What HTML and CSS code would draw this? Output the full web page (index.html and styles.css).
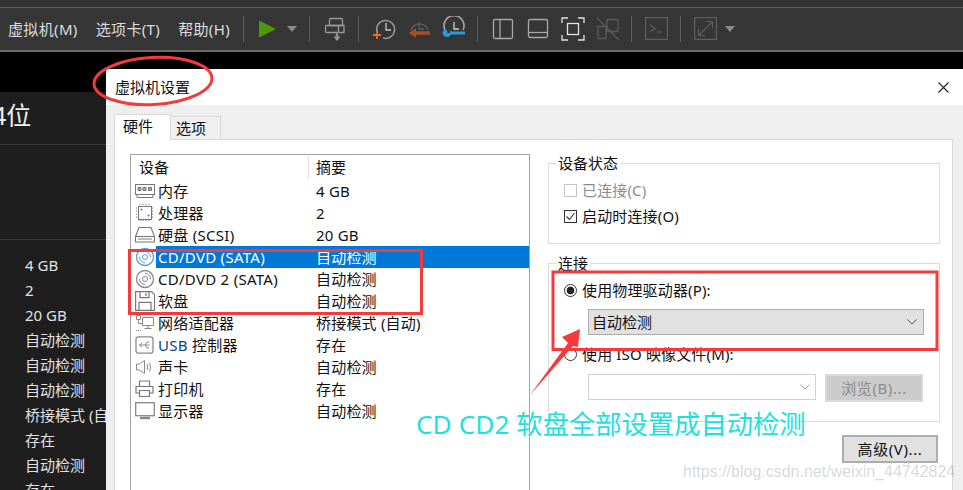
FILE: index.html
```html
<!DOCTYPE html>
<html lang="zh">
<head>
<meta charset="utf-8">
<title>虚拟机设置</title>
<link rel="stylesheet" href="styles.css">
</head>
<body>
<div class="toolbar">
  <span class="menu">虚拟机(M)</span><span class="menu">选项卡(T)</span><span class="menu">帮助(H)</span>
  <i class="sep first"></i>
  <span class="tb"><svg width="20" height="20" viewBox="0 0 20 20"><path d="M1 1.500 18 10 1 18.500z" fill="#4e9a06"/></svg></span>
  <span class="caret"></span>
  <i class="sep wide"></i>
  <span class="tb"><svg width="22" height="26" viewBox="0 0 22 26" fill="none" stroke="#9a9a9a" stroke-width="1.300"><rect x="5.500" y="2.500" width="13" height="7" rx="1"/><rect x="1.500" y="9.500" width="13" height="7" rx="1"/><path d="M15 9.500h5v7h-5"/><path d="M13 17.500v3" stroke-width="2.500"/><path d="M9.500 20.500h7L13 25z" fill="#9a9a9a" stroke="none"/></svg></span>
  <i class="sep"></i>
  <span class="tb"><svg width="24" height="26" viewBox="0 0 24 26" fill="none"><path d="M5 16a9 9 0 1 1 6 6" stroke="#9a9a9a" stroke-width="1.500"/><path d="M14 7v7h5" stroke="#c8c8c8" stroke-width="1.300"/><path d="M1 19h8M5 15v8" stroke="#e8702a" stroke-width="1.800"/></svg></span>
  <span class="tb"><svg width="24" height="26" viewBox="0 0 24 26" fill="none"><path d="M4 14a9 9 0 0 1 17 0" stroke="#5c5c5c" stroke-width="1.500"/><path d="M12 6v7h5" stroke="#5c5c5c" stroke-width="1.300"/><path d="M23 17H7" stroke="#a9501f" stroke-width="3.500"/><path d="M9 12v10l-7-5z" fill="#a9501f"/></svg></span>
  <span class="tb"><svg width="24" height="26" viewBox="0 0 24 26" fill="none"><path d="M3 14a10 10 0 1 1 18 0" stroke="#a0a0a0" stroke-width="1.700"/><path d="M12 6v7h5" stroke="#d0d0d0" stroke-width="1.300"/><path d="M23 17H8" stroke="#2b9ad8" stroke-width="3"/><path d="M2 14a4 4 0 0 0 3 7 4 4 0 0 0 4-4 3 3 0 0 0-1-3v3H5v-3z" fill="#2b9ad8"/></svg></span>
  <i class="sep"></i>
  <span class="tb"><svg width="22" height="22" viewBox="0 0 22 22" fill="none" stroke="#a8a8a8" stroke-width="1.300"><rect x="1.500" y="1.500" width="19" height="19" rx="1.500"/><path d="M8 1.500v19"/></svg></span>
  <span class="tb"><svg width="22" height="22" viewBox="0 0 22 22" fill="none" stroke="#a8a8a8" stroke-width="1.300"><rect x="1.500" y="1.500" width="19" height="18" rx="1.500"/><path d="M1.500 14.500h19"/></svg></span>
  <span class="tb"><svg width="24" height="24" viewBox="0 0 24 24" fill="none" stroke="#e4e4e4" stroke-width="1.300"><path d="M1 6V1h6M17 1h6v5M23 18v5h-6M7 23H1v-5"/><rect x="6.500" y="6.500" width="11" height="11"/></svg></span>
  <span class="tb"><svg width="24" height="24" viewBox="0 0 24 24" fill="none" stroke="#5a5a5a" stroke-width="1.300"><path d="M2 9.500h8v12H3a1 1 0 0 1-1-1zM11 2.500h10a1 1 0 0 1 1 1v11H11zM1 1l22 22"/></svg></span>
  <i class="sep"></i>
  <span class="tb"><svg width="23" height="23" viewBox="0 0 23 23" fill="none" stroke="#5f5f5f" stroke-width="1.200"><rect x=".6" y=".6" width="21.800" height="21.800"/><path d="M5 8l5 3.500L5 15M12 15h5"/></svg></span>
  <i class="sep"></i>
  <span class="tb"><svg width="23" height="23" viewBox="0 0 23 23" fill="none" stroke="#5f5f5f" stroke-width="1.200"><rect x=".6" y=".6" width="21.800" height="21.800"/><path d="M5 18L18 5M12 4.500h6.500V11M4.500 12v6.500H11"/></svg></span>
  <span class="caret"></span>
</div>

<div class="stage">
  <aside class="side">
    <div class="side-title">4位</div>
    <div class="side-gap"></div>
    <ul class="side-values">
      <li>4 GB</li><li>2</li><li>20 GB</li><li>自动检测</li><li>自动检测</li><li>自动检测</li><li>桥接模式 (自动)</li><li>存在</li><li>自动检测</li><li>存在</li>
    </ul>
  </aside>

  <section class="dialog">
    <header class="titlebar">
      <span>虚拟机设置</span>
      <svg class="close" width="11" height="11" viewBox="0 0 11 11"><path d="M.5.500l10 10M10.500.500l-10 10" stroke="#222" stroke-width="1.100"/></svg>
    </header>
    <div class="body">
      <nav class="tabs"><span class="tab on">硬件</span><span class="tab">选项</span></nav>
      <div class="panel">
        <div class="list">
          <div class="row head"><span class="ic"></span><span class="name">设备</span><span class="val">摘要</span></div>
          <div class="row"><span class="ic"><svg width="20" height="16" viewBox="0 0 20 16" fill="none" stroke="#777"><rect x=".5" y="1.500" width="19" height="10"/><path d="M3 4.500h3v3H3zM8 4.500h3v3H8zM13.500 4.500h3v3h-3z" fill="#aaa"/><path d="M2 11.500v3h16v-3"/></svg></span><span class="name">内存</span><span class="val">4 GB</span></div>
          <div class="row"><span class="ic"><svg width="20" height="20" viewBox="0 0 20 20" fill="none" stroke="#777"><rect x="3.500" y="3.500" width="13" height="13"/><path d="M5 1v2M8 1v2M11 1v2M14 1v2M5 17v2M8 17v2M11 17v2M14 17v2M1 5h2M1 8h2M1 11h2M1 14h2M17 5h2M17 8h2M17 11h2M17 14h2" stroke-dasharray="1 1"/><path d="M6 6h1v1H6zM13 12h1v1h-1z" fill="#777"/></svg></span><span class="name">处理器</span><span class="val">2</span></div>
          <div class="row"><span class="ic"><svg width="20" height="18" viewBox="0 0 20 18" fill="none" stroke="#777" stroke-width="1.100"><path d="M4 1.500h12l3.500 9v5.500H.5v-5.500zM.5 10.500h19"/><path d="M3 13h14" stroke="#bbb" stroke-width="2"/></svg></span><span class="name">硬盘 (SCSI)</span><span class="val">20 GB</span></div>
          <div class="row sel"><span class="ic"><svg width="20" height="20" viewBox="0 0 20 20" fill="none" stroke="#5a9fd4"><circle cx="10" cy="10" r="8.500" stroke-width="1.300"/><circle cx="10" cy="10" r="2.500"/><path d="M4.500 10a5.500 5.500 0 0 0 5.500 5.500M15.500 10A5.500 5.500 0 0 0 10 4.500"/></svg></span><span class="name">CD/DVD (SATA)</span><span class="val">自动检测</span></div>
          <div class="row"><span class="ic"><svg width="20" height="20" viewBox="0 0 20 20" fill="none" stroke="#888"><circle cx="10" cy="10" r="8.500" stroke-width="1.300"/><circle cx="10" cy="10" r="2.500"/><path d="M4.500 10a5.500 5.500 0 0 0 5.500 5.500M15.500 10A5.500 5.500 0 0 0 10 4.500"/></svg></span><span class="name">CD/DVD 2 (SATA)</span><span class="val">自动检测</span></div>
          <div class="row"><span class="ic"><svg width="20" height="20" viewBox="0 0 20 20" fill="none" stroke="#777" stroke-width="1.200"><path d="M.6.600h16l3 3v15.800H.6z"/><path d="M5 .6v6h9v-6M11 2v3M4 19.400v-8h12v8"/></svg></span><span class="name">软盘</span><span class="val">自动检测</span></div>
          <div class="row"><span class="ic"><svg width="20" height="18" viewBox="0 0 20 18" fill="none" stroke="#888"><path d="M7.500 3.500h11v8h-11zM13 11.500v3M9.500 14.500h7"/><path d="M1.500 1.500h4v4h-4zM3.500 5.500v4h4"/><path d="M1 16.500h6" stroke-dasharray="1 1"/></svg></span><span class="name">网络适配器</span><span class="val">桥接模式 (自动)</span></div>
          <div class="row"><span class="ic"><svg width="19" height="18" viewBox="0 0 19 18" fill="none" stroke="#8a8a8a"><rect x="1" y=".8" width="17" height="16.400" rx="2.500" stroke-width="1.300"/><path d="M4.500 9h10M7 7 4.500 9 7 11M10 9l2-3h2M10.500 9l1.500 3h2"/></svg></span><span class="name"><span class="blue">USB</span> 控制器</span><span class="val">存在</span></div>
          <div class="row"><span class="ic"><svg width="18" height="16" viewBox="0 0 18 16" fill="none" stroke="#8a8a8a"><path d="M1.500 5h3l5-3.500v13L4.500 11h-3z"/><path d="M12 5q1.500 3 0 6M14.500 3.500q2 4.500 0 9"/></svg></span><span class="name">声卡</span><span class="val">自动检测</span></div>
          <div class="row"><span class="ic"><svg width="19" height="18" viewBox="0 0 19 18" fill="none" stroke="#777" stroke-width="1.200"><path d="M4.500 6V1h10v5M4.500 13H1V6.500h17V13h-3.500"/><path d="M4.500 10.500h10v6h-10z"/></svg></span><span class="name">打印机</span><span class="val">存在</span></div>
          <div class="row"><span class="ic"><svg width="20" height="18" viewBox="0 0 20 18" fill="none" stroke="#888" stroke-width="1.300"><rect x=".7" y=".7" width="18.600" height="13"/><path d="M5 16h10" stroke-width="2.500"/></svg></span><span class="name">显示器</span><span class="val">自动检测</span></div>
        </div>

        <div class="right">
          <div class="group status">
            <div class="legend">设备状态</div>
            <label class="opt off"><i class="check"></i>已连接(C)</label>
            <label class="opt"><i class="check on"><svg width="11" height="11" viewBox="0 0 11 11"><path d="M1.500 5.500 4.500 8.500 9.500 2" fill="none" stroke="#333" stroke-width="1.100"/></svg></i>启动时连接(O)</label>
          </div>
          <div class="group conn">
            <div class="legend">连接</div>
            <label class="opt"><i class="radio on"></i>使用物理驱动器(P):</label>
            <div class="combo filled"><span>自动检测</span><svg width="10" height="6" viewBox="0 0 10 6"><path d="M.5.500 5 5 9.500.500" fill="none" stroke="#555" stroke-width="1"/></svg></div>
            <label class="opt iso"><i class="radio"></i>使用 ISO 映像文件(M):</label>
            <div class="file">
              <div class="combo empty"><span></span><svg width="10" height="6" viewBox="0 0 10 6"><path d="M.5.500 5 5 9.500.500" fill="none" stroke="#aaa" stroke-width="1"/></svg></div>
              <div class="btn disabled">浏览(B)...</div>
            </div>
          </div>
          <div class="adv"><div class="btn">高级(V)...</div></div>
        </div>
      </div>
    </div>
  </section>
</div>

<svg class="marks" width="963" height="490" viewBox="0 0 963 490" fill="none" stroke="#f43a3a" stroke-width="3">
  <ellipse cx="153" cy="81" rx="59" ry="23.500" transform="rotate(-3 153 81)"/>
  <rect x="129.500" y="250.500" width="292" height="63"/>
  <rect x="553" y="272" width="384" height="77.500"/>
  <path d="M530 395 568 343 562 337 580 329 578 347 573 346z" fill="#f43a3a" stroke="none"/>
</svg>
<div class="note">CD CD2 软盘全部设置成自动检测</div>
<div class="wm">https://blog.csdn.net/weixin_44742824</div>
</body>
</html>
```

FILE: styles.css
```css
* { box-sizing: border-box; }
html, body { margin: 0; height: 490px; overflow: hidden; }
body {
  width: 963px; background: #000; color: #111;
  font: 15px/22px "Noto Sans", "Noto Sans CJK SC", sans-serif;
}
.toolbar {
  height: 52px; padding-left: 8px; display: flex; align-items: center;
  background: #363636; color: #dedede;
  border-top: 7px solid #333; box-shadow: inset 0 1px 0 #5c5c5c;
  border-bottom: 2px solid #6a6a6a;
}
.menu { margin-right: 18px; white-space: nowrap; letter-spacing: .35px; }
.menu:nth-child(3) { margin-right: 0; }
.sep { width: 1px; height: 26px; background: #5e5e5e; margin: 0 7px 0 6px; flex: none; }
.sep.first { margin: 0 6px 0 13px; }
.sep.wide { margin-left: 10px; }
.tb { width: 35px; height: 28px; display: flex; align-items: center; justify-content: center; flex: none; }
.caret { width: 14px; display: flex; justify-content: center; flex: none; }
.caret::before { content: ""; border: 5px solid transparent; border-top: 6px solid #8a8a8a; border-bottom: 0; }

.stage { display: flex; height: 438px; }
.side { width: 106px; margin-top: 40px; background: #1e1e1e; color: #e2e2e2; overflow: hidden; flex: none; }
.side-title { height: 53px; border-bottom: 1px solid #383838; font-size: 25px; line-height: 46px; text-indent: -8px; color: #f0f0f0; white-space: nowrap; }
.side-gap { height: 95px; border-bottom: 1px solid #383838; }
.side-values { list-style: none; margin: 13px 0 0; padding: 0 0 0 25px; white-space: nowrap; overflow: hidden; }
.side-values li { height: 25px; line-height: 25px; }

.dialog { flex: 1; margin-top: 17px; display: flex; flex-direction: column; background: #efefef; }
.titlebar { height: 36px; background: #fff; display: flex; align-items: center; justify-content: space-between; padding: 0 14px 0 9px; line-height: 36px; flex: none; }
.body { flex: 1; padding: 9px 10px 0 8px; display: flex; flex-direction: column; }
.tabs { display: flex; align-items: flex-end; height: 26px; position: relative; z-index: 1; margin-bottom: -1px; flex: none; }
.tab { width: 50px; height: 24px; line-height: 22px; padding-left: 5px; background: #f0f0f0; border: 1px solid #d9d9d9; border-left: 0; font-size: 15px; }
.tab.on { width: 57px; height: 26px; line-height: 22px; padding-left: 8px; background: #fff; border: 1px solid #d9d9d9; border-bottom: 0; }
.panel { flex: 1; background: #fff; border: 1px solid #d9d9d9; border-bottom: 0; display: flex; padding: 14px 0 0 15px; }

.list { width: 400px; border: 1px solid #a3a3a8; border-bottom: 0; flex: none; }
.row { height: 22px; display: flex; align-items: center; white-space: nowrap; }
.row.head { height: 25px; }
.ic { width: 25px; height: 22px; padding-left: 4px; display: flex; align-items: center; flex: none; }
.name { width: 159px; height: 22px; padding-left: 2px; letter-spacing: .28px; flex: none; }
.val { flex: 1; height: 22px; padding-left: 1px; letter-spacing: .2px; }
.row.head .name { width: 171px; height: 23px; margin-left: -18px; padding-left: 1px; letter-spacing: 0; border-right: 1px solid #e0e0e0; }
.row.head .val { padding-left: 7px; height: 23px; letter-spacing: 0; }
.row.sel .name, .row.sel .val { background: #0078d7; color: #fff; }
.blue { color: #0b3f80; }

.right { width: 392px; margin: 9px 0 0 18px; flex: none; }
.group { border: 1px solid #dcdcdc; }
.legend { width: fit-content; height: 22px; margin: -12px 0 1px 7px; padding: 0 2px; background: #fff; }
.status { height: 81px; }
.conn { height: 159px; margin-top: 19px; }
.opt { display: flex; align-items: center; height: 22px; margin: 4px 0 0 15px; white-space: nowrap; letter-spacing: .15px; }
.status .opt:first-of-type { margin-top: 5px; }
.conn .opt { margin-top: 5px; }
.conn .opt.iso { margin-top: 8px; }
.opt.off { color: #8c8c8c; }
.check { width: 13px; height: 13px; border: 1px solid #333; margin-right: 5px; display: flex; align-items: center; justify-content: center; background: #fff; flex: none; }
.opt.off .check { border-color: #c4c4c4; }
.radio { width: 13px; height: 13px; border: 1px solid #333; border-radius: 50%; margin-right: 5px; flex: none; }
.radio.on { background: radial-gradient(circle, #222 0 3.5px, #fff 4.2px); }
.combo { height: 26px; display: flex; align-items: center; justify-content: space-between; padding: 0 6px 0 3px; border: 1px solid #adadad; margin-top: 8px; }
.combo.filled { width: 336px; margin-left: 39px; background: #e1e1e1; }
.combo.empty { width: 228px; height: 26px; border-color: #d0d0d0; margin: 0; background: #fff; padding-right: 5px; }
.file { display: flex; gap: 9px; margin: 9px 0 0 39px; }
.btn { height: 28px; line-height: 25px; text-align: center; border: 2px solid #adadad; background: #e1e1e1; letter-spacing: .6px; }
.btn.disabled { width: 98px; border-color: #d9d9d9; background: #ccc; color: #8a8a8a; }
.adv { display: flex; justify-content: flex-end; margin: 13px 2px 0 0; }
.adv .btn { width: 96px; }

.marks { position: absolute; left: 0; top: 0; pointer-events: none; }
.note { position: absolute; left: 416px; top: 406px; font-size: 26.300px; line-height: 36px; color: #1fdfdf; white-space: nowrap; }
.wm { position: absolute; left: 683px; top: 461px; font: 16px/22px "Liberation Sans", sans-serif; color: rgba(120,120,120,.3); white-space: nowrap; }
```
